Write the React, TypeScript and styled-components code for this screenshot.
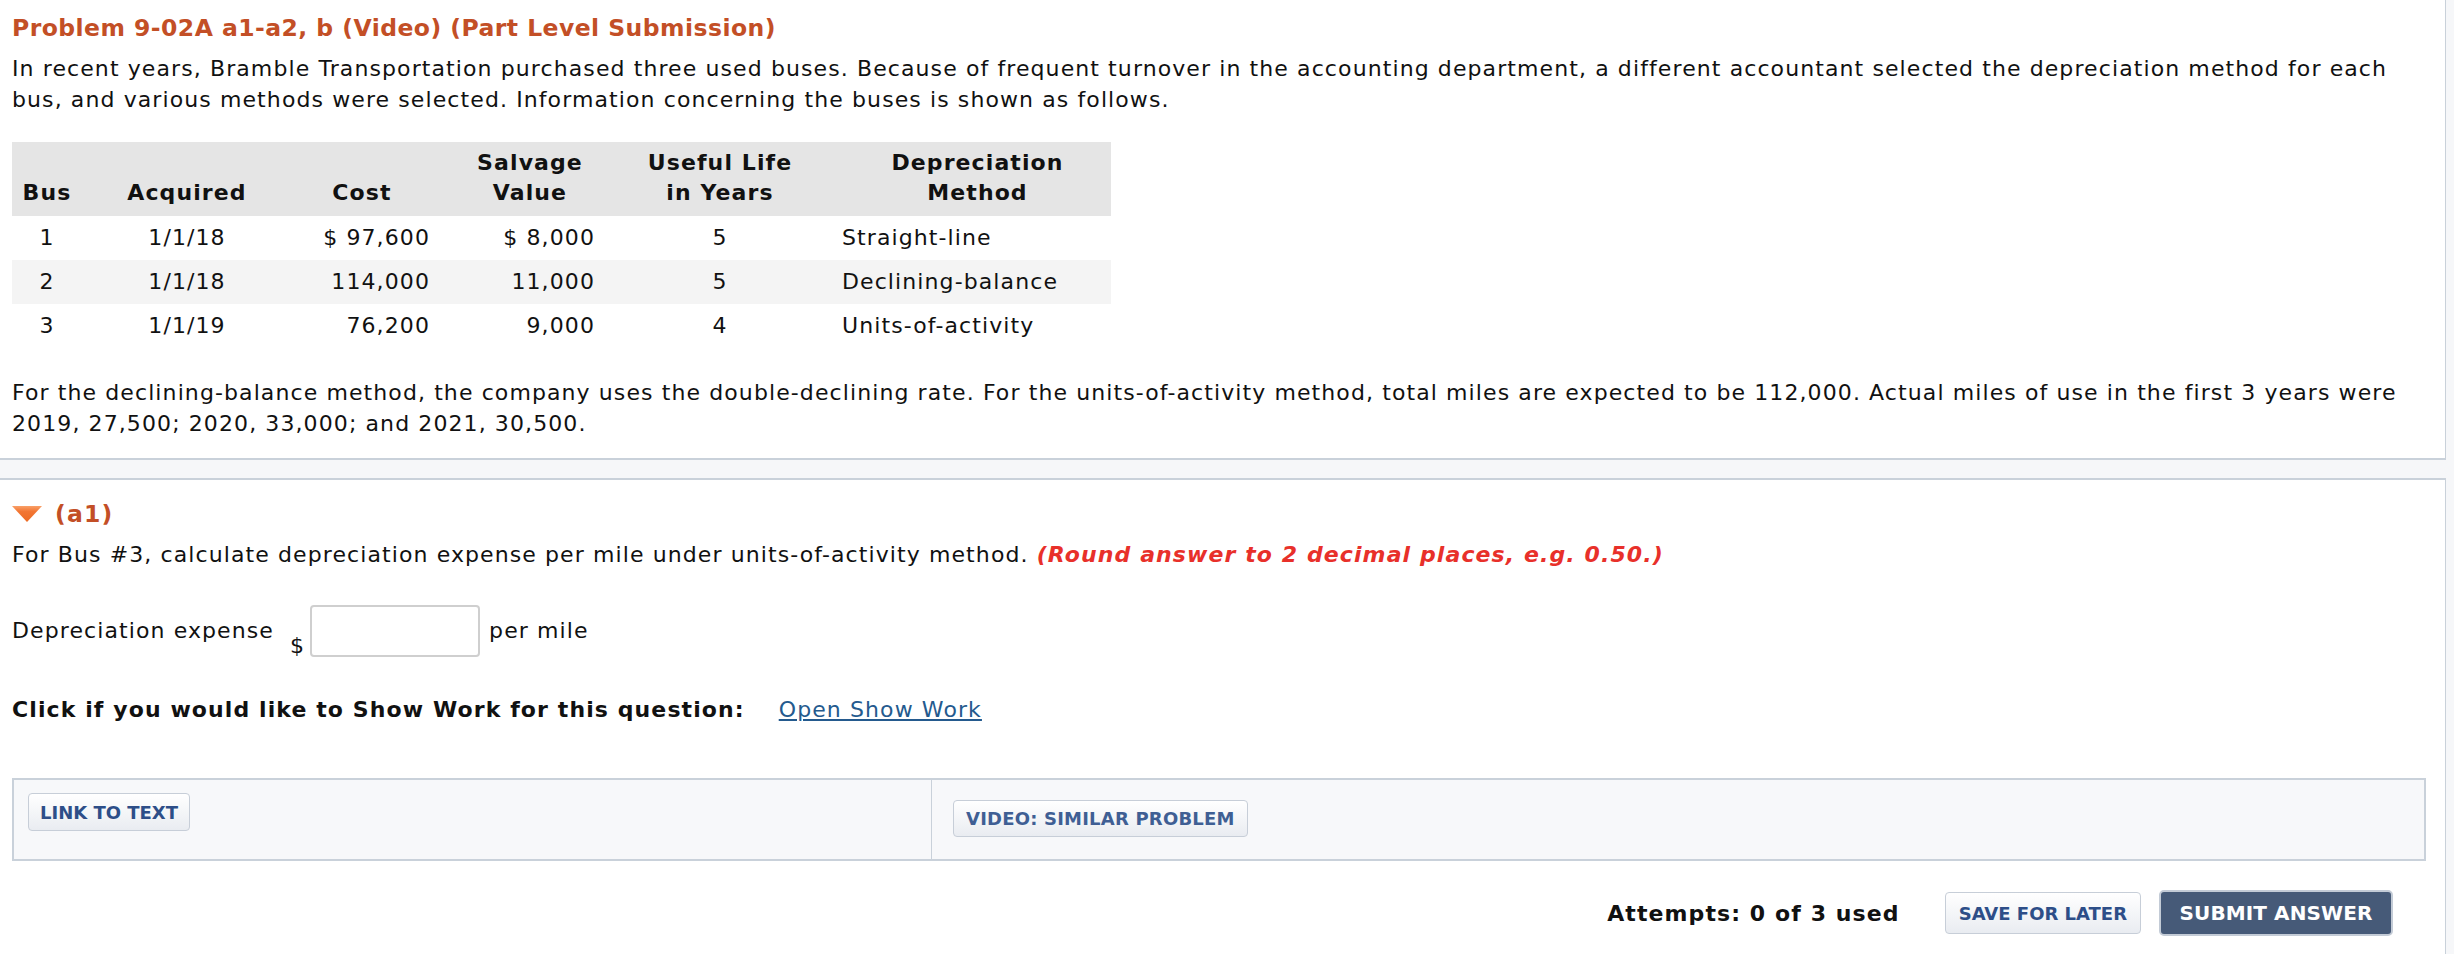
import React from "react";
import styled, { createGlobalStyle } from "styled-components";

const GlobalStyle = createGlobalStyle`
  html, body {
    margin: 0;
    padding: 0;
    background: #f6f7f9;
  }
  body {
    font-family: "DejaVu Sans", Verdana, sans-serif;
    letter-spacing: 1.1px;
    color: #111;
  }
`;

type Bus = {
  bus: string;
  acquired: string;
  cost: string;
  salvage: string;
  life: string;
  method: string;
};

const buses: Array<Bus> = [
  { bus: "1", acquired: "1/1/18", cost: "$ 97,600", salvage: "$ 8,000", life: "5", method: "Straight-line" },
  { bus: "2", acquired: "1/1/18", cost: "114,000", salvage: "11,000", life: "5", method: "Declining-balance" },
  { bus: "3", acquired: "1/1/19", cost: "76,200", salvage: "9,000", life: "4", method: "Units-of-activity" },
];

const App = () => {
  return (
    <Page>
      <GlobalStyle />
      <ProblemPanel>
        <Title>Problem 9-02A a1-a2, b (Video) (Part Level Submission)</Title>
        <Text>
          In recent years, Bramble Transportation purchased three used buses. Because of frequent turnover in the
          accounting department, a different accountant selected the depreciation method for each bus, and various
          methods were selected. Information concerning the buses is shown as follows.
        </Text>

        <DataTable>
          <colgroup>
            <col style={{ width: 70 }} />
            <col style={{ width: 210 }} />
            <col style={{ width: 140 }} />
            <col style={{ width: 196 }} />
            <col style={{ width: 184 }} />
            <col style={{ width: 299 }} />
          </colgroup>
          <thead>
            <tr>
              <Th>Bus</Th>
              <Th>Acquired</Th>
              <Th>Cost</Th>
              <Th>
                Salvage
                <br />
                Value
              </Th>
              <Th>
                Useful Life
                <br />
                in Years
              </Th>
              <Th $shift={32}>
                Depreciation
                <br />
                Method
              </Th>
            </tr>
          </thead>
          <tbody>
            {buses.map((b, index) => (
              <Row key={b.bus} $striped={index % 2 === 1}>
                <Td>{b.bus}</Td>
                <Td>{b.acquired}</Td>
                <Td $align="right" $pad={2}>{b.cost}</Td>
                <Td $align="right" $pad={33}>{b.salvage}</Td>
                <Td>{b.life}</Td>
                <Td $align="left" $pad={30}>{b.method}</Td>
              </Row>
            ))}
          </tbody>
        </DataTable>

        <Text $top={29}>
          For the declining-balance method, the company uses the double-declining rate. For the units-of-activity
          method, total miles are expected to be 112,000. Actual miles of use in the first 3 years were 2019, 27,500;
          2020, 33,000; and 2021, 30,500.
        </Text>
      </ProblemPanel>

      <QuestionPanel>
        <PartHeader>
          <svg width="30" height="16" viewBox="0 0 30 16">
            <defs>
              <linearGradient id="tri" x1="0" y1="0" x2="0" y2="1">
                <stop offset="0" stopColor="#f9a068" />
                <stop offset="0.35" stopColor="#f27532" />
                <stop offset="1" stopColor="#ec6a22" />
              </linearGradient>
            </defs>
            <polygon points="0,0 30,0 15,16" fill="url(#tri)" />
          </svg>
          <PartLabel>(a1)</PartLabel>
        </PartHeader>

        <Text>
          For Bus #3, calculate depreciation expense per mile under units-of-activity method.{" "}
          <Hint>(Round answer to 2 decimal places, e.g. 0.50.)</Hint>
        </Text>

        <AnswerRow>
          <AnswerLabel>Depreciation expense</AnswerLabel>
          <Money>
            <Dollar>$</Dollar>
            <AnswerInput type="text" />
          </Money>
          <AnswerLabel $gap={9}>per mile</AnswerLabel>
        </AnswerRow>

        <ShowWork>
          Click if you would like to Show Work for this question:
          <WorkLink href="#">Open Show Work</WorkLink>
        </ShowWork>

        <ResourceBox>
          <ResourceCell $width={917} $top={13} $left={14}>
            <LightButton $h={38} $px={11}>LINK TO TEXT</LightButton>
          </ResourceCell>
          <ResourceCell $top={20} $left={21} $divider>
            <LightButton $h={37} $px={12} $soft>VIDEO: SIMILAR PROBLEM</LightButton>
          </ResourceCell>
        </ResourceBox>

        <Footer>
          <Attempts>Attempts: 0 of 3 used</Attempts>
          <LightButton $h={42} $px={13}>SAVE FOR LATER</LightButton>
          <SubmitButton>SUBMIT ANSWER</SubmitButton>
        </Footer>
      </QuestionPanel>
    </Page>
  );
};

const Page = styled.div`
  width: 2454px;
  min-height: 954px;
  display: flex;
  flex-direction: column;
  gap: 18px;
`;

const ProblemPanel = styled.section`
  width: 2446px;
  box-sizing: border-box;
  background: #fff;
  border-right: 1px solid #c9d1da;
  border-bottom: 2px solid #c9d1da;
  padding: 13px 34px 19px 12px;
`;

const Title = styled.h2`
  margin: 0;
  font-size: 23.5px;
  line-height: 30px;
  font-weight: bold;
  letter-spacing: 0.45px;
  color: #c34f26;
`;

const Text = styled.p<{ $top?: number }>`
  margin: ${(p) => p.$top ?? 10}px 0 0;
  font-size: 22px;
  line-height: 31px;
`;

const DataTable = styled.table`
  margin-top: 27px;
  width: 1099px;
  border-collapse: collapse;
  table-layout: fixed;
  font-size: 22px;
`;

const Th = styled.th<{ $shift?: number }>`
  background: #e5e5e5;
  font-weight: bold;
  text-align: center;
  vertical-align: bottom;
  line-height: 30px;
  padding: 6px 0 8px ${(p) => p.$shift ?? 0}px;
`;

const Row = styled.tr<{ $striped?: boolean }>`
  background: ${(p) => (p.$striped ? "#f4f4f4" : "#fff")};
`;

const Td = styled.td<{ $align?: "left" | "right" | "center"; $pad?: number }>`
  height: 44px;
  padding: 0;
  line-height: 44px;
  text-align: ${(p) => p.$align ?? "center"};
  padding-left: ${(p) => (p.$align === "left" ? p.$pad ?? 0 : 0)}px;
  padding-right: ${(p) => (p.$align === "right" ? p.$pad ?? 0 : 0)}px;
  white-space: nowrap;
`;

const QuestionPanel = styled.section`
  width: 2446px;
  box-sizing: border-box;
  flex: 1;
  background: #fff;
  border-top: 2px solid #c9d1da;
  border-right: 1px solid #c9d1da;
  padding: 19px 20px 16px 12px;
`;

const PartHeader = styled.div`
  display: flex;
  align-items: center;
  gap: 13px;
  height: 30px;
`;

const PartLabel = styled.span`
  font-size: 23.5px;
  line-height: 30px;
  font-weight: bold;
  letter-spacing: 1.2px;
  color: #c34f26;
`;

const Hint = styled.em`
  font-weight: bold;
  font-style: italic;
  color: #e8302a;
`;

const AnswerRow = styled.div`
  margin-top: 35px;
  display: flex;
  align-items: flex-start;
  height: 52px;
`;

const AnswerLabel = styled.span<{ $gap?: number }>`
  margin-top: 10px;
  margin-left: ${(p) => p.$gap ?? 0}px;
  font-size: 22px;
  line-height: 31px;
`;

const Money = styled.div`
  display: flex;
  align-items: flex-end;
  margin-left: 16px;
  gap: 5px;
`;

const Dollar = styled.span`
  font-size: 22px;
  line-height: 22px;
`;

const AnswerInput = styled.input`
  width: 170px;
  height: 52px;
  box-sizing: border-box;
  border: 2px solid #cfcfcf;
  border-radius: 4px;
  background: #fff;
  margin: 0;
  padding: 0 6px;
  font-size: 22px;
`;

const ShowWork = styled.div`
  margin-top: 37px;
  font-size: 22px;
  line-height: 31px;
  font-weight: bold;
`;

const WorkLink = styled.a`
  margin-left: 34px;
  font-weight: normal;
  color: #245a8e;
  text-decoration: underline;
`;

const ResourceBox = styled.div`
  margin-top: 53px;
  width: 2414px;
  height: 83px;
  box-sizing: border-box;
  display: flex;
  background: #f7f8fa;
  border: 2px solid #c9d1da;
`;

const ResourceCell = styled.div<{ $width?: number; $top: number; $left: number; $divider?: boolean }>`
  ${(p) => (p.$width ? `width: ${p.$width}px;` : "flex: 1;")}
  box-sizing: border-box;
  display: flex;
  align-items: flex-start;
  padding: ${(p) => p.$top}px 0 0 ${(p) => p.$left}px;
  border-left: ${(p) => (p.$divider ? "1px solid #c9d1da" : "none")};
`;

const LightButton = styled.button<{ $h: number; $px: number; $soft?: boolean }>`
  height: ${(p) => p.$h}px;
  padding: 0 ${(p) => p.$px}px;
  box-sizing: border-box;
  border: 1px solid #c7ced8;
  border-radius: 4px;
  background: linear-gradient(#ffffff, #e9ecf1);
  color: ${(p) => (p.$soft ? "#3f5f94" : "#2d4e88")};
  font-family: "DejaVu Sans", Verdana, sans-serif;
  font-size: 18px;
  font-weight: bold;
  letter-spacing: ${(p) => (p.$soft ? 0.2 : 0)}px;
  white-space: nowrap;
  cursor: pointer;
`;

const Footer = styled.div`
  margin-top: 29px;
  margin-right: 32px;
  display: flex;
  justify-content: flex-end;
  align-items: center;
`;

const Attempts = styled.span`
  margin-right: 45px;
  font-size: 22px;
  font-weight: bold;
`;

const SubmitButton = styled.button`
  margin-left: 18px;
  width: 234px;
  height: 46px;
  box-sizing: border-box;
  border: 2px solid #c3cbd6;
  border-radius: 5px;
  background: #465a78;
  color: #fff;
  font-family: "DejaVu Sans", Verdana, sans-serif;
  font-size: 20px;
  font-weight: bold;
  letter-spacing: 0.1px;
  white-space: nowrap;
  cursor: pointer;
`;

export default App;
